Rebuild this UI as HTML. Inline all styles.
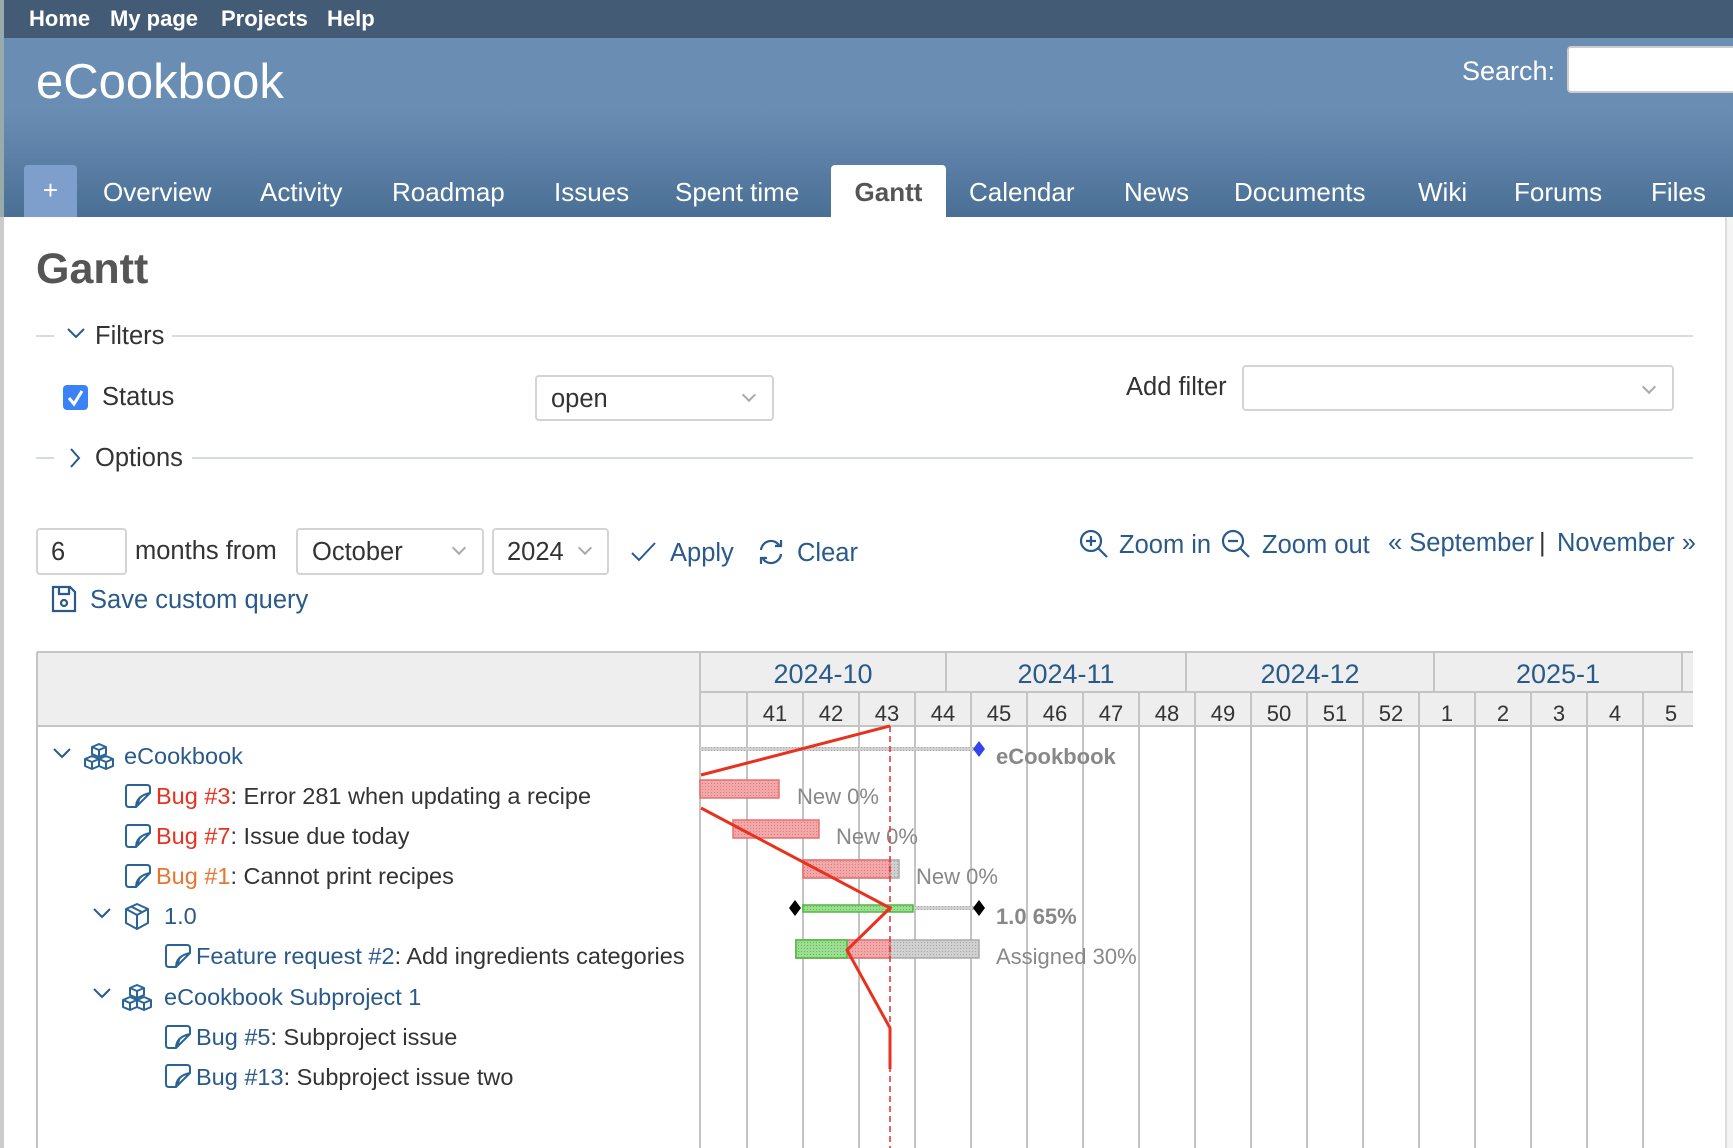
<!DOCTYPE html>
<html><head><meta charset="utf-8"><style>
*{margin:0;padding:0;box-sizing:border-box}
body{width:1733px;height:1148px;overflow:hidden;background:#fff;font-family:"Liberation Sans",sans-serif;position:relative;color:#333}
.a{position:absolute;white-space:nowrap}
#top{left:0;top:0;width:1733px;height:38px;background:#445b75}
#hdr{left:0;top:38px;width:1733px;height:179px;background:linear-gradient(#6a8db4 0%,#6a8db4 40%,#4a6f95 100%)}
.tm{color:#fff;font-weight:bold;font-size:22px;top:6px}
.tab{color:#fff;font-size:26px;top:177px}
.lnk{color:#2a5a8a}
.sel{border:2px solid #d4d4d4;border-radius:4px;background:#fff}
.chev{position:absolute;width:10px;height:10px;border-right:2px solid #aaa;border-bottom:2px solid #aaa;transform:rotate(45deg)}
.t22{font-size:25.5px}
.row{font-size:23.5px}
</style></head><body>
<div class="a" style="left:0;top:0;width:4px;height:1148px;background:#ccc"></div>
<div class="a" id="top"></div>
<div class="a tm" style="left:29px">Home</div>
<div class="a tm" style="left:110px">My page</div>
<div class="a tm" style="left:221px">Projects</div>
<div class="a tm" style="left:327px">Help</div>
<div class="a" id="hdr"></div>
<div class="a" style="left:0;top:0;width:4px;height:217px;background:#9aa"></div>
<div class="a" style="left:36px;top:54px;color:#fff;font-size:49px">eCookbook</div>
<div class="a" style="left:1462px;top:56px;color:#fff;font-size:27px">Search:</div>
<div class="a" style="left:1567px;top:46px;width:180px;height:47px;background:#fff;border:2px solid #ccc;border-radius:4px"></div>
<div class="a" style="left:24px;top:165px;width:53px;height:52px;background:#7e9fcb;border-radius:4px 4px 0 0;color:#fff;font-size:26px;text-align:center;line-height:50px">+</div>
<div class="a tab" style="left:103px">Overview</div>
<div class="a tab" style="left:260px">Activity</div>
<div class="a tab" style="left:392px">Roadmap</div>
<div class="a tab" style="left:554px">Issues</div>
<div class="a tab" style="left:675px">Spent time</div>
<div class="a" style="left:831px;top:165px;width:115px;height:53px;background:#fff;border-radius:4px 4px 0 0;color:#555;font-weight:bold;font-size:26px;text-align:center;line-height:54px">Gantt</div>
<div class="a tab" style="left:969px">Calendar</div>
<div class="a tab" style="left:1124px">News</div>
<div class="a tab" style="left:1234px">Documents</div>
<div class="a tab" style="left:1418px">Wiki</div>
<div class="a tab" style="left:1514px">Forums</div>
<div class="a tab" style="left:1651px">Files</div>
<div class="a" style="left:1725px;top:217px;width:2px;height:931px;background:#ddd"></div>
<div class="a" style="left:1727px;top:217px;width:6px;height:931px;background:#f4f4f4"></div>

<div class="a" style="left:36px;top:245px;font-size:43px;font-weight:bold;color:#555">Gantt</div>
<!-- Filters -->
<div class="a" style="left:36px;top:335px;width:18px;height:2px;background:#d5dbe3"></div>
<div class="a" style="left:172px;top:335px;width:1521px;height:2px;background:#d5dbe3"></div>
<svg class="a" style="left:66px;top:326px" width="20" height="14"><path d="M2 3 L10 11 L18 3" fill="none" stroke="#2a5a8a" stroke-width="2"/></svg>
<div class="a t22" style="left:95px;top:322px;color:#333">Filters</div>
<div class="a" style="left:63px;top:385px;width:25px;height:25px;background:#3b82f6;border-radius:4px"></div>
<svg class="a" style="left:63px;top:385px" width="25" height="25"><path d="M6 13 L11 19 L19 6" fill="none" stroke="#fff" stroke-width="3"/></svg>
<div class="a t22" style="left:102px;top:383px">Status</div>
<div class="a sel" style="left:535px;top:375px;width:239px;height:46px"></div>
<div class="a t22" style="left:551px;top:385px">open</div>
<div class="chev" style="left:744px;top:390px"></div>
<div class="a t22" style="left:1126px;top:373px">Add filter</div>
<div class="a sel" style="left:1242px;top:365px;width:432px;height:46px"></div>
<div class="chev" style="left:1644px;top:382px"></div>
<!-- Options -->
<div class="a" style="left:36px;top:457px;width:18px;height:2px;background:#d5dbe3"></div>
<div class="a" style="left:192px;top:457px;width:1501px;height:2px;background:#d5dbe3"></div>
<svg class="a" style="left:68px;top:447px" width="14" height="22"><path d="M3 2 L11 11 L3 20" fill="none" stroke="#2a5a8a" stroke-width="2"/></svg>
<div class="a t22" style="left:95px;top:444px">Options</div>
<!-- toolbar -->
<div class="a sel" style="left:36px;top:528px;width:91px;height:47px"></div>
<div class="a t22" style="left:51px;top:538px">6</div>
<div class="a t22" style="left:135px;top:537px">months from</div>
<div class="a sel" style="left:296px;top:528px;width:188px;height:47px"></div>
<div class="a t22" style="left:312px;top:538px">October</div>
<div class="chev" style="left:454px;top:543px"></div>
<div class="a sel" style="left:492px;top:528px;width:117px;height:47px"></div>
<div class="a t22" style="left:507px;top:538px">2024</div>
<div class="chev" style="left:580px;top:543px"></div>
<svg class="a" style="left:630px;top:540px" width="28" height="24"><path d="M2 13 L9 20 L25 3" fill="none" stroke="#2a5a8a" stroke-width="2"/></svg>
<div class="a t22 lnk" style="left:670px;top:539px">Apply</div>
<svg class="a" style="left:756px;top:537px" width="30" height="30" fill="none" stroke="#2a5a8a" stroke-width="2.2"><path d="M5 13 A10 10 0 0 1 23 8 M25 3 V9 H19"/><path d="M25 17 A10 10 0 0 1 7 22 M5 27 V21 H11"/></svg>
<div class="a t22 lnk" style="left:797px;top:539px">Clear</div>
<svg class="a" style="left:1078px;top:528px" width="32" height="32" fill="none" stroke="#2a5a8a" stroke-width="2.2"><circle cx="13" cy="13" r="10"/><path d="M20 20 L29 29 M8 13 H18 M13 8 V18"/></svg>
<div class="a t22 lnk" style="left:1119px;top:531px">Zoom in</div>
<svg class="a" style="left:1220px;top:528px" width="32" height="32" fill="none" stroke="#2a5a8a" stroke-width="2.2"><circle cx="13" cy="13" r="10"/><path d="M20 20 L29 29 M8 13 H18"/></svg>
<div class="a t22 lnk" style="left:1262px;top:531px">Zoom out</div>
<div class="a t22 lnk" style="left:1388px;top:529px">« September</div>
<div class="a t22" style="left:1539px;top:529px">|</div>
<div class="a t22 lnk" style="left:1557px;top:529px">November »</div>
<svg class="a" style="left:50px;top:584px" width="28" height="30" fill="none" stroke="#2a5a8a" stroke-width="2.2"><path d="M3 3 H20 L25 8 V27 H3 Z M9 3 V10 H19 V3"/><circle cx="14" cy="19" r="3"/></svg>
<div class="a t22 lnk" style="left:90px;top:586px">Save custom query</div>

<!-- Gantt -->
<div class="a" style="left:37px;top:652px;width:1656px;height:74px;background:#eee"></div>
<svg class="a" style="left:0;top:0" width="1733" height="1148">
<defs>
<pattern id="hp" width="3" height="3" patternUnits="userSpaceOnUse"><rect width="3" height="3" fill="#f0a8a8"/><rect width="1" height="1" fill="#e07a7a"/></pattern>
<pattern id="hg" width="3" height="3" patternUnits="userSpaceOnUse"><rect width="3" height="3" fill="#9edc94"/><rect width="1" height="1" fill="#5cbf50"/></pattern>
<pattern id="hx" width="3" height="3" patternUnits="userSpaceOnUse"><rect width="3" height="3" fill="#d0d0d0"/><rect width="1" height="1" fill="#a8a8a8"/></pattern>
</defs>
<g stroke="#c4c4c4" stroke-width="2" fill="none">
<path d="M37 652 H1693 M37 726 H1693 M700 692 H1693 M37 652 V1148 M700 652 V1148 M946 652 V692 M1186 652 V692 M1434 652 V692 M1682 652 V692"/>
<path d="M747 692V1148M803 692V1148M859 692V1148M915 692V1148M971 692V1148M1027 692V1148M1083 692V1148M1139 692V1148M1195 692V1148M1251 692V1148M1307 692V1148M1363 692V1148M1419 692V1148M1475 692V1148M1531 692V1148M1587 692V1148M1643 692V1148"/>
</g>
<g font-family="Liberation Sans, sans-serif" font-size="27" fill="#2a5a8a" text-anchor="middle">
<text x="823" y="683">2024-10</text><text x="1066" y="683">2024-11</text><text x="1310" y="683">2024-12</text><text x="1558" y="683">2025-1</text>
</g>
<g font-family="Liberation Sans, sans-serif" font-size="22" fill="#333" text-anchor="middle">
<text x="775" y="721">41</text><text x="831" y="721">42</text><text x="887" y="721">43</text><text x="943" y="721">44</text><text x="999" y="721">45</text><text x="1055" y="721">46</text><text x="1111" y="721">47</text><text x="1167" y="721">48</text><text x="1223" y="721">49</text><text x="1279" y="721">50</text><text x="1335" y="721">51</text><text x="1391" y="721">52</text><text x="1447" y="721">1</text><text x="1503" y="721">2</text><text x="1559" y="721">3</text><text x="1615" y="721">4</text><text x="1671" y="721">5</text>
</g>
<rect x="700" y="747" width="279" height="4" fill="url(#hx)"/>
<path d="M979 741 L985 749 L979 757 L973 749 Z" fill="#3344ee"/>
<rect x="700" y="780" width="79" height="18" fill="url(#hp)" stroke="#e87070" stroke-width="1.5"/>
<rect x="733" y="820" width="86" height="18" fill="url(#hp)" stroke="#e87070" stroke-width="1.5"/>
<rect x="803" y="860" width="96" height="18" fill="url(#hx)" stroke="#aaa" stroke-width="1.5"/>
<rect x="803" y="860" width="87" height="18" fill="url(#hp)" stroke="#e87070" stroke-width="1.5"/>
<rect x="803" y="906" width="176" height="4" fill="url(#hx)"/>
<rect x="803" y="905" width="110" height="7" fill="url(#hg)" stroke="#4cbb3c" stroke-width="1.5"/>
<path d="M795 900 L801 908 L795 916 L789 908 Z M979 900 L985 908 L979 916 L973 908 Z" fill="#000"/>
<rect x="796" y="940" width="183" height="18" fill="url(#hx)" stroke="#aaa" stroke-width="1.5"/>
<rect x="796" y="940" width="94" height="18" fill="url(#hp)" stroke="#e87070" stroke-width="1.5"/>
<rect x="796" y="940" width="51" height="18" fill="url(#hg)" stroke="#4cbb3c" stroke-width="1.5"/>
<g font-family="Liberation Sans, sans-serif" font-size="22" fill="#888">
<text x="996" y="764" font-weight="bold">eCookbook</text>
<text x="797" y="804">New 0%</text>
<text x="836" y="844">New 0%</text>
<text x="916" y="884">New 0%</text>
<text x="996" y="924" font-weight="bold">1.0 65%</text>
<text x="996" y="964">Assigned 30%</text>
</g>
<path d="M890 726 V1148" stroke="#e03030" stroke-width="1.5" stroke-dasharray="6,4"/>
<polyline points="890,726 701,775" fill="none" stroke="#e8321f" stroke-width="3"/>
<polyline points="701,808 890,908 847,950 890,1028 890,1069" fill="none" stroke="#e8321f" stroke-width="3"/>
<g fill="none" stroke="#2a5a8a" stroke-width="2">
<path d="M54 749 L62 757 L70 749"/>
<path d="M94 909 L102 917 L110 909"/>
<path d="M94 989 L102 997 L110 989"/>
</g>
<g fill="none" stroke="#2a6496" stroke-width="2" stroke-linejoin="round">
<g transform="translate(85,742)"><path d="M14 2 L21 5 L21 12 L14 15 L7 12 L7 5 Z M7 5 L14 8 L21 5 M14 8 V15"/><path d="M7 14 L14 17 L14 24 L7 27 L0 24 L0 17 Z M0 17 L7 20 L14 17 M7 20 V27"/><path d="M21 14 L28 17 L28 24 L21 27 L14 24 L14 17 Z M14 17 L21 20 L28 17 M21 20 V27"/></g>
<g transform="translate(123,983)"><path d="M14 2 L21 5 L21 12 L14 15 L7 12 L7 5 Z M7 5 L14 8 L21 5 M14 8 V15"/><path d="M7 14 L14 17 L14 24 L7 27 L0 24 L0 17 Z M0 17 L7 20 L14 17 M7 20 V27"/><path d="M21 14 L28 17 L28 24 L21 27 L14 24 L14 17 Z M14 17 L21 20 L28 17 M21 20 V27"/></g>
<g transform="translate(125,903)"><path d="M12 1 L23 6 V20 L12 26 L1 20 V6 Z M1 6 L12 12 L23 6 M12 12 V26 M6 3.5 L17 9"/></g>
</g>
<g fill="none" stroke="#2a6496" stroke-width="2" stroke-linejoin="round">
<path id="iss" d="M128 785 Q126 785 126 788 V804 Q126 807 129 807 H136 L150 793 V788 Q150 785 147 785 Z M136 807 Q136 796 150 793 M140 797 Q138 802 137 806"/>
<use href="#iss" y="40"/><use href="#iss" y="80"/>
<use href="#iss" x="40" y="160"/><use href="#iss" x="40" y="241"/><use href="#iss" x="40" y="280"/>
</g>
</svg>
<div class="a row lnk" style="left:124px;top:743px">eCookbook</div>
<div class="a row" style="left:156px;top:783px"><span style="color:#e8321f">Bug #3</span>: Error 281 when updating a recipe</div>
<div class="a row" style="left:156px;top:823px"><span style="color:#e8321f">Bug #7</span>: Issue due today</div>
<div class="a row" style="left:156px;top:863px"><span style="color:#e8742f">Bug #1</span>: Cannot print recipes</div>
<div class="a row lnk" style="left:164px;top:903px">1.0</div>
<div class="a row" style="left:196px;top:943px"><span class="lnk">Feature request #2</span>: Add ingredients categories</div>
<div class="a row lnk" style="left:164px;top:984px">eCookbook Subproject 1</div>
<div class="a row" style="left:196px;top:1024px"><span class="lnk">Bug #5</span>: Subproject issue</div>
<div class="a row" style="left:196px;top:1064px"><span class="lnk">Bug #13</span>: Subproject issue two</div>
</body></html>
